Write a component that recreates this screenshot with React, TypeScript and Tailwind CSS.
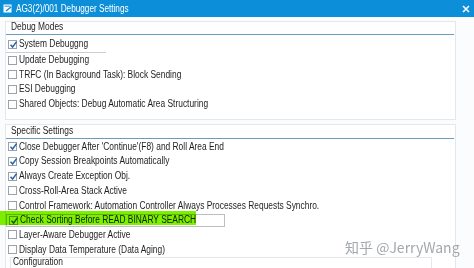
import React from "react";

function Box({ checked }: { checked: boolean }) {
  return (
    <span className="relative inline-flex items-center justify-center w-[9px] h-[9px] border border-[#9aa3ab] bg-white shrink-0 mr-[2px]">
      {checked && (
        <svg width="9" height="9" viewBox="0 0 9 9" className="absolute left-[0px] top-[-1px]">
          <path d="M1.5 4.8 L3.6 7 L7.6 1.6" stroke="#2a63a8" strokeWidth="1.5" fill="none" />
        </svg>
      )}
    </span>
  );
}

function Txt({ children }: { children: React.ReactNode }) {
  return <span className="inline-block whitespace-nowrap origin-left scale-x-[0.84]">{children}</span>;
}

function Row({ label, checked, className = "" }: { label: string; checked?: boolean; className?: string }) {
  return (
    <div className={"flex items-center h-[14.7px] pl-[2px] " + className}>
      <Box checked={!!checked} />
      <Txt>{label}</Txt>
    </div>
  );
}

export default function App() {
  return (
    <div
      className="relative w-[474px] h-[268px] overflow-hidden bg-[#fbfcfd] text-[#1e1e1e] text-[10px] leading-none"
      style={{ fontFamily: '"Liberation Sans", Arial, sans-serif' }}
    >
      {/* title bar */}
      <div className="flex items-center h-[17px] bg-[#0c8fd8] text-white pl-[3px] pr-[4px]">
        <svg width="10" height="9" viewBox="0 0 10 9" className="mr-[3px]">
          <rect x="0.5" y="0.5" width="8" height="8" fill="#ffffff" />
          <rect x="1.5" y="1.5" width="6" height="1.5" fill="#6fb3e6" />
          <path d="M3 7 L8 3" stroke="#0c8fd8" strokeWidth="1.4" />
        </svg>
        <span className="inline-block whitespace-nowrap origin-left scale-x-[0.82] text-[10px]">
          AG3(2)/001 Debugger Settings
        </span>
        <span className="ml-auto">
          <svg width="8" height="8" viewBox="0 0 8 8">
            <path d="M1 1 L7 7 M7 1 L1 7" stroke="#ffffff" strokeWidth="1.6" />
          </svg>
        </span>
      </div>

      <div className="pl-[5px] pt-[4px] w-[456px]">
        {/* Debug Modes */}
        <div className="bg-white border border-[#e4e8ec] pb-[8px]">
          <div className="h-[13px] flex items-end pl-[5px] pb-[2px] border-b border-[#6c9cbd] mr-[1px]">
            <Txt>Debug Modes</Txt>
          </div>
          <div className="pt-[2px]">
            <div className="w-[100px] border-b border-[#c9ced3]">
              <Row label="System Debuggng" checked className="h-[13.7px]" />
            </div>
            <Row label="Update Debugging" />
            <Row label="TRFC (In Background Task): Block Sending" />
            <Row label="ESI Debugging" />
            <Row label="Shared Objects: Debug Automatic Area Structuring" />
          </div>
        </div>

        {/* Specific Settings */}
        <div className="mt-[4px] bg-white border border-[#e4e8ec] h-[200px]">
          <div className="h-[14px] flex items-end pl-[5px] pb-[2px] border-b border-[#6c9cbd] mr-[1px]">
            <Txt>Specific Settings</Txt>
          </div>
          <div>
            <Row label="Close Debugger After 'Continue'(F8) and Roll Area End" checked />
            <Row label="Copy Session Breakpoints Automatically" checked />
            <Row label="Always Create Exception Obj." checked />
            <Row label="Cross-Roll-Area Stack Active" />
            <Row label="Control Framework: Automation Controller Always Processes Requests Synchro." />
            <div className="w-[219px] h-[13px] border border-[#b9bfc5] my-[0.85px] flex items-center overflow-hidden">
              <Row label="Check Sorting Before READ BINARY SEARCH" checked className="pl-[1px]" />
            </div>
            <Row label="Layer-Aware Debugger Active" />
            <Row label="Display Data Temperature (Data Aging)" />
          </div>
          <div className="ml-[4px] w-[422px] bg-white border border-[#e4e8ec]">
            <div className="h-[12px] flex items-end pl-[2px] pb-[1px] border-b-2 border-[#5aa6c2]">
              <Txt>Configuration</Txt>
            </div>
          </div>
        </div>
      </div>

      {/* green highlight */}
      <div className="absolute left-0 top-[211px] w-[196px] h-[14px] bg-[#7cf000] mix-blend-multiply pointer-events-none" />

      {/* watermark */}
      <div
        className="absolute left-[345px] top-[240px] text-[14px] text-[#a3a8ad] whitespace-nowrap"
        style={{ fontFamily: '"Noto Sans CJK SC", "Liberation Sans", sans-serif' }}
      >
        知乎 @JerryWang
      </div>
    </div>
  );
}
